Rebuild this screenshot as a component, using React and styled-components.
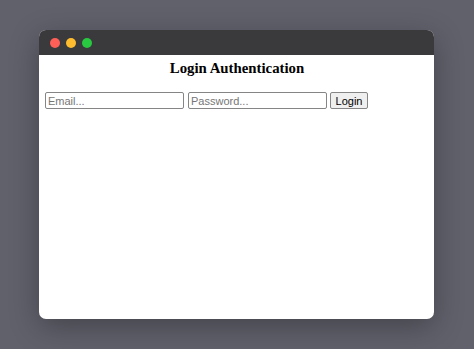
import React from "react";
import styled, { createGlobalStyle } from "styled-components";

const Global = createGlobalStyle`
  html, body { margin: 0; padding: 0; }
  body { background: #61616c; width: 474px; height: 349px; overflow: hidden; }
`;

const Page = styled.div`
  width: 474px;
  height: 349px;
  box-sizing: border-box;
  padding: 30px 40px 30px 39px;
`;

const Window = styled.div`
  width: 395px;
  height: 289px;
  border-radius: 7px;
  overflow: hidden;
  background: #ffffff;
  display: flex;
  flex-direction: column;
  box-shadow: 0 8px 30px rgba(0, 0, 0, 0.3);
`;

const TitleBar = styled.div`
  height: 25px;
  flex: none;
  background: #3a3a3c;
  display: flex;
  align-items: center;
  gap: 6px;
  padding-left: 11px;
`;

const Dot = styled.span`
  width: 10px;
  height: 10px;
  border-radius: 50%;
  background: ${(p) => p.$color};
`;

const Content = styled.div`
  padding: 5px 6px;
  display: flex;
  flex-direction: column;
`;

const Heading = styled.h3`
  margin: 0 0 0 1px;
  text-align: center;
  font-family: "Liberation Serif", "Times New Roman", serif;
  font-weight: bold;
  font-size: 14.8px;
  line-height: 16px;
  color: #000;
`;

const Form = styled.div`
  display: flex;
  align-items: center;
  margin-top: 16px;
`;

const Input = styled.input`
  box-sizing: border-box;
  width: 139px;
  height: 17px;
  margin: 0 ${(p) => p.$gap}px 0 0;
  padding: 0 2px;
  border: 1px solid #858585;
  border-radius: 2px;
  font-family: "Liberation Sans", Arial, sans-serif;
  font-size: 11px;
  color: #000;
  outline: none;
  &::placeholder { color: #767676; }
`;

const Button = styled.button`
  box-sizing: border-box;
  width: 38px;
  height: 17px;
  padding: 0;
  border: 1px solid #858585;
  border-radius: 2px;
  background: #efefef;
  font-family: "Liberation Sans", Arial, sans-serif;
  font-size: 11px;
  color: #000;
`;

export default function App() {
  return (
    <>
      <Global />
      <Page>
        <Window>
          <TitleBar>
            <Dot $color="#fe5f57" />
            <Dot $color="#febc2e" />
            <Dot $color="#28c840" />
          </TitleBar>
          <Content>
            <Heading>Login Authentication</Heading>
            <Form>
              <Input type="email" placeholder="Email..." $gap={4} />
              <Input type="password" placeholder="Password..." $gap={3} />
              <Button>Login</Button>
            </Form>
          </Content>
        </Window>
      </Page>
    </>
  );
}
